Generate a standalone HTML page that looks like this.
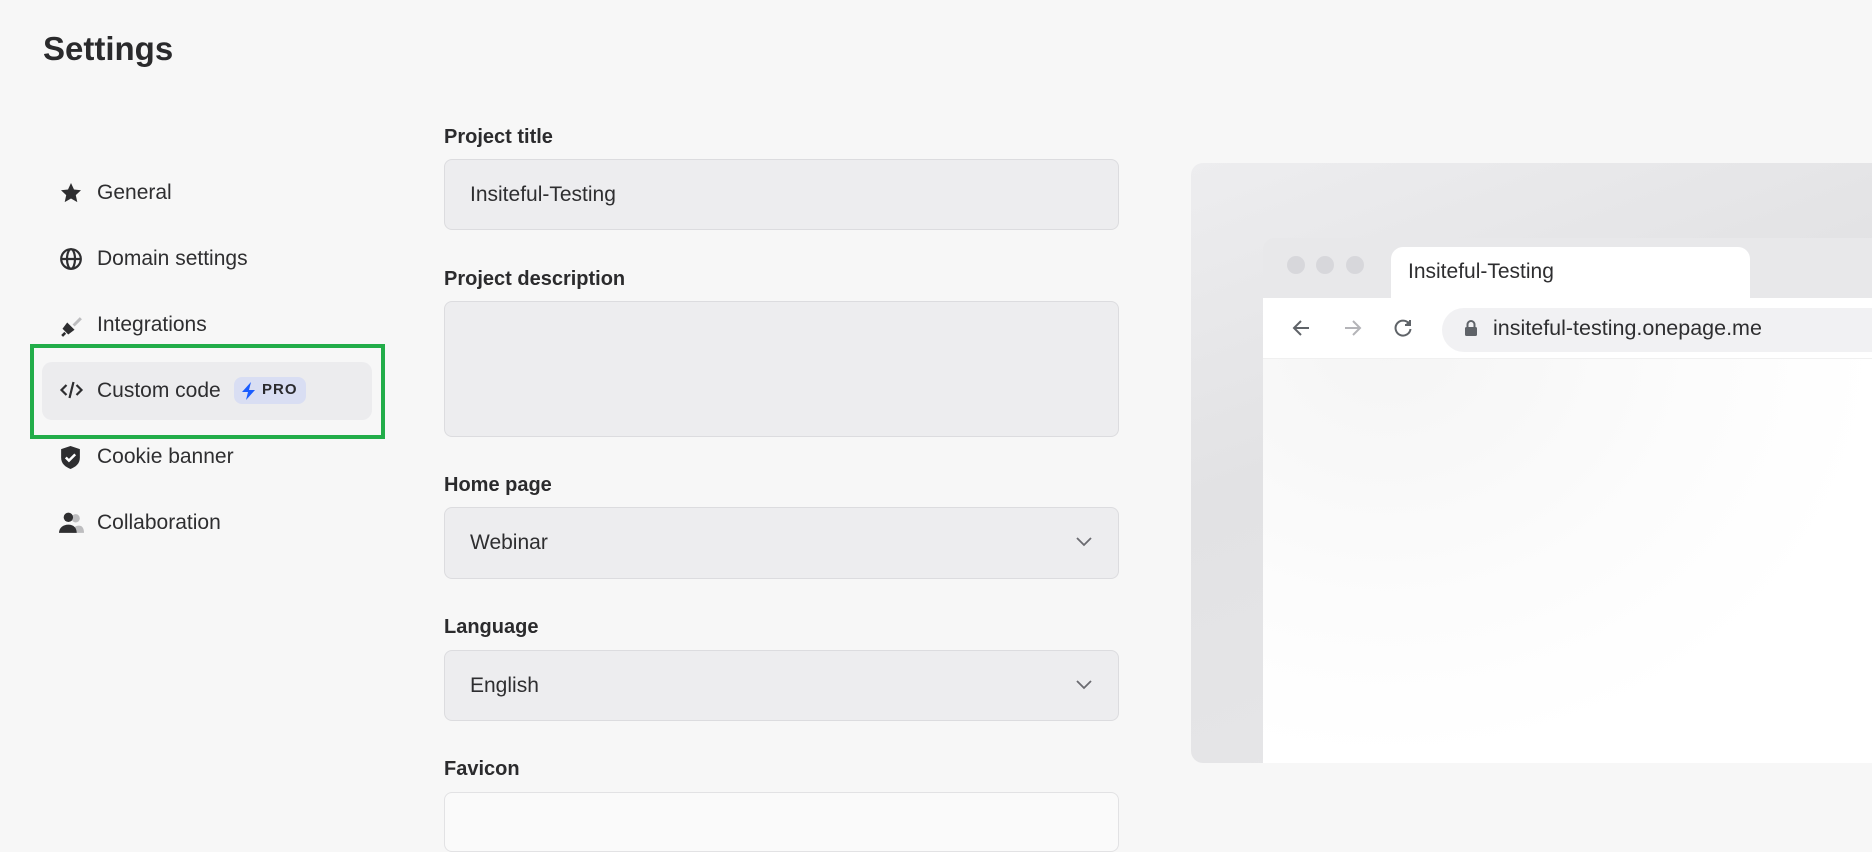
<!DOCTYPE html>
<html><head><meta charset="utf-8"><style>
*{box-sizing:border-box;margin:0;padding:0}
body{width:1872px;height:820px;background:#f7f7f7;font-family:"Liberation Sans",sans-serif;color:#2b2b2d;position:relative;overflow:hidden}
.abs{position:absolute}
h1{position:absolute;left:43px;top:30px;font-size:33px;font-weight:bold;color:#2a2a2c}
.nav{position:absolute;left:59px;font-size:21px;color:#2e2e30;height:30px}
.nav svg{position:absolute;left:0;top:4px}
.nav span{position:absolute;left:38px;top:4px;white-space:nowrap}
.lbl{position:absolute;left:444px;font-size:20px;font-weight:bold;color:#2b2b2d}
.inp{position:absolute;left:444px;width:675px;background:#ededef;border:1px solid #dcdcdf;border-radius:8px;font-size:21px;color:#2e2e30;padding-left:25px;display:flex;align-items:center}
.chev{position:absolute;right:26px;top:50%;margin-top:-6px}
</style></head><body>
<h1>Settings</h1>

<div class="abs" style="left:42px;top:362px;width:330px;height:58px;background:#ececee;border-radius:10px"></div>
<div class="abs" style="left:30px;top:344px;width:355px;height:95px;border:4px solid #22ad49"></div>

<div class="nav" style="top:177px"><svg width="24" height="24" viewBox="0 0 24 24"><path d="M12 2l3 6.5 7 .8-5.2 4.8 1.5 7L12 17.5 5.7 21.1l1.5-7L2 9.3l7-.8z" fill="#2e2e30"/></svg><span>General</span></div>
<div class="nav" style="top:243px"><svg width="24" height="24" viewBox="0 0 24 24" fill="none" stroke="#2e2e30" stroke-width="2.2"><circle cx="12" cy="12" r="9.8"/><ellipse cx="12" cy="12" rx="4" ry="9.8"/><path d="M2.5 12h19"/></svg><span>Domain settings</span></div>
<div class="nav" style="top:309px"><svg width="25" height="25" viewBox="0 0 24 24"><path d="M3 22l3-3M5 15l4 4 4-3-5-5z" stroke="#2e2e30" stroke-width="2.5" fill="#2e2e30"/><path d="M13 11l7-7 2 2-7 7z" fill="#bdbdbf"/></svg><span>Integrations</span></div>
<div class="nav" style="top:375px"><svg width="25" height="22" viewBox="0 0 24 22" fill="none" stroke="#2e2e30" stroke-width="2.2"><path d="M7 6l-5 5 5 5M17 6l5 5-5 5M14 3l-4 16"/></svg><span>Custom code</span></div>
<div class="abs" style="left:234px;top:377px;width:72px;height:27px;background:#d9def3;border-radius:8px;font-size:15px;font-weight:bold;color:#2a2a2e;letter-spacing:1px;padding:4px 0 0 28px">PRO</div>
<svg class="abs" style="left:241px;top:382px" width="16" height="18" viewBox="0 0 16 18"><path d="M10 0L1 10h6l-2 8 9-10H8z" fill="#1a5cff"/></svg>
<div class="nav" style="top:441px"><svg width="23" height="25" viewBox="0 0 22 24"><path d="M11 1l9 3v8c0 6-4 9-9 11C6 21 2 18 2 12V4z" fill="#2e2e30"/><path d="M6.5 12l3 3 6-6" stroke="#fff" stroke-width="2.4" fill="none"/></svg><span>Cookie banner</span></div>
<div class="nav" style="top:507px"><svg width="25" height="23" viewBox="0 0 24 22"><circle cx="16" cy="7" r="4" fill="#bdbdbf"/><path d="M13 21c0-5 3-7 6-7s5 2 5 7z" fill="#bdbdbf"/><circle cx="9" cy="6" r="4.5" fill="#2e2e30"/><path d="M0 21c0-5 4-8 9-8s8 3 8 8z" fill="#2e2e30"/></svg><span>Collaboration</span></div>

<div class="lbl" style="top:126px">Project title</div>
<div class="inp" style="top:159px;height:71px">Insiteful-Testing</div>
<div class="lbl" style="top:268px">Project description</div>
<div class="inp" style="top:301px;height:136px"></div>
<div class="lbl" style="top:474px">Home page</div>
<div class="inp" style="top:507px;height:72px">Webinar<svg class="chev" width="16" height="10" viewBox="0 0 16 10" fill="none" stroke="#6b6b70" stroke-width="1.8"><path d="M1 1l7 7 7-7"/></svg></div>
<div class="lbl" style="top:616px">Language</div>
<div class="inp" style="top:650px;height:71px">English<svg class="chev" width="16" height="10" viewBox="0 0 16 10" fill="none" stroke="#6b6b70" stroke-width="1.8"><path d="M1 1l7 7 7-7"/></svg></div>
<div class="lbl" style="top:758px">Favicon</div>
<div class="inp" style="top:792px;height:60px;background:#fafafa;border-color:#e2e2e4"></div>

<div class="abs" style="left:1191px;top:163px;width:700px;height:600px;border-radius:12px;background:linear-gradient(160deg,#ededef,#e2e2e4 40%,#e8e8ea)"></div>
<div class="abs" style="left:1263px;top:238px;width:620px;height:62px;background:#e8e8ea;border-radius:12px 0 0 0"></div>
<div class="abs" style="left:1287px;top:256px;width:18px;height:18px;border-radius:50%;background:#d7d7db"></div>
<div class="abs" style="left:1316px;top:256px;width:18px;height:18px;border-radius:50%;background:#d7d7db"></div>
<div class="abs" style="left:1346px;top:256px;width:18px;height:18px;border-radius:50%;background:#d7d7db"></div>
<div class="abs" style="left:1391px;top:247px;width:359px;height:55px;background:#fff;border-radius:12px 12px 0 0;font-size:21px;color:#2e2e30;padding:13px 0 0 17px">Insiteful-Testing</div>
<div class="abs" style="left:1263px;top:298px;width:620px;height:465px;background:radial-gradient(ellipse at 20% 10%,#f5f5f5,#fcfcfc 45%,#fff 70%)"></div>
<div class="abs" style="left:1263px;top:298px;width:620px;height:61px;background:#fff;border-bottom:1px solid #f0f0f0"></div>
<svg class="abs" style="left:1291px;top:318px" width="20" height="20" viewBox="0 0 20 20" fill="none" stroke="#5f6368" stroke-width="2"><path d="M18 10H3M10 3l-7 7 7 7"/></svg>
<svg class="abs" style="left:1343px;top:318px" width="20" height="20" viewBox="0 0 20 20" fill="none" stroke="#b4b4b8" stroke-width="2"><path d="M2 10h15M10 3l7 7-7 7"/></svg>
<svg class="abs" style="left:1392px;top:317px" width="22" height="22" viewBox="0 0 22 22" fill="none" stroke="#5f6368" stroke-width="2"><path d="M17 6.5A7.5 7.5 0 1 0 18.5 12"/><path d="M18 3v5h-5" fill="#5f6368"/></svg>
<div class="abs" style="left:1442px;top:308px;width:460px;height:44px;background:#f1f1f3;border-radius:22px"></div>
<svg class="abs" style="left:1464px;top:319px" width="14" height="18" viewBox="0 0 14 18"><path d="M3.5 8V5.5a3.5 3.5 0 0 1 7 0V8" stroke="#5f6368" stroke-width="2" fill="none"/><rect x="1" y="8" width="12" height="9" rx="1.5" fill="#5f6368"/></svg>
<div class="abs" style="left:1493px;top:316px;font-size:21.5px;color:#2e2e30">insiteful-testing.onepage.me</div>
</body></html>
